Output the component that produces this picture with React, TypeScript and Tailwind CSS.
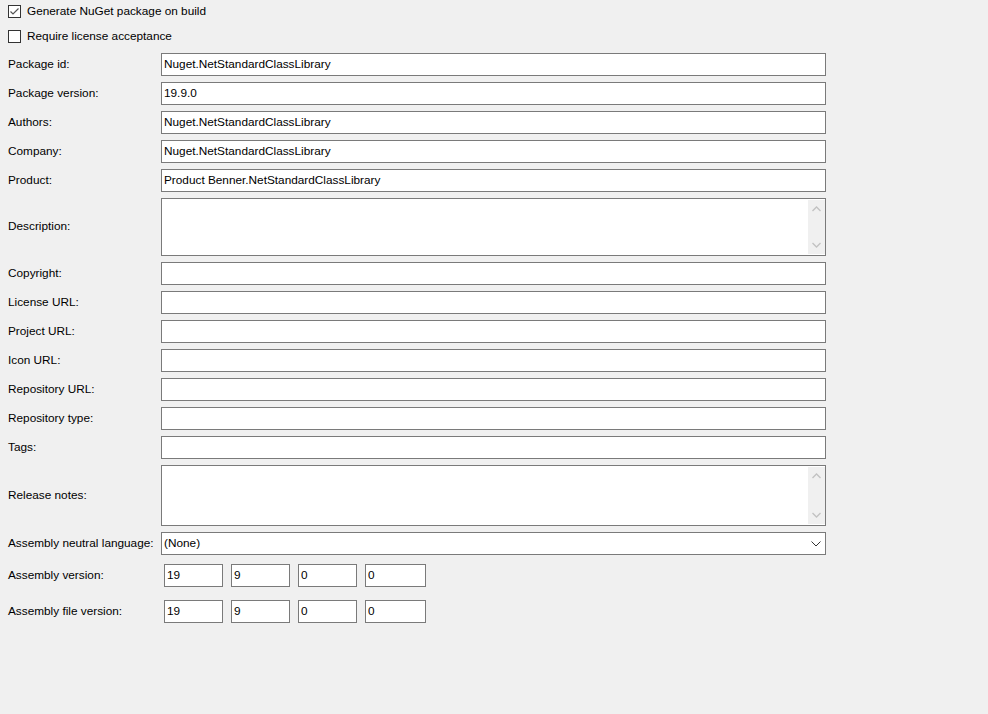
import React from "react"

const font = { fontFamily: '"Liberation Sans", Arial, sans-serif' }

function TextBox({ value = "" }: { value?: string }) {
  return (
    <div className="flex h-[23px] w-[665px] items-center whitespace-nowrap border border-[#7a7a7a] bg-white px-[2px] text-black">
      {value}
    </div>
  )
}

function ScrollArrows() {
  return (
    <div className="flex w-[17px] flex-col items-center justify-between bg-[#f0f0f0] py-[6px]">
      <svg width="9" height="6" viewBox="0 0 9 6">
        <polyline points="0.5,5 4.5,1 8.5,5" fill="none" stroke="#c2c2c2" strokeWidth="1.3" />
      </svg>
      <svg width="9" height="6" viewBox="0 0 9 6">
        <polyline points="0.5,1 4.5,5 8.5,1" fill="none" stroke="#c2c2c2" strokeWidth="1.3" />
      </svg>
    </div>
  )
}

function TextArea({ h }: { h: string }) {
  return (
    <div className={`flex w-[665px] justify-end border border-[#7a7a7a] bg-white py-[1px] ${h}`}>
      <ScrollArrows />
    </div>
  )
}

function Row({ label, children }: { label: string; children: React.ReactNode }) {
  return (
    <div className="flex items-center">
      <div className="w-[153px] shrink-0 whitespace-nowrap">{label}</div>
      {children}
    </div>
  )
}

function Check({ checked, label }: { checked?: boolean; label: string }) {
  return (
    <div className="flex h-[13px] items-center gap-[6px]">
      <div className="flex h-[13px] w-[13px] items-center justify-center border border-[#333333] bg-white">
        {checked && (
          <svg width="11" height="11" viewBox="0 0 11 11">
            <polyline points="1.5,5.5 4,8 9.5,2.5" fill="none" stroke="#555555" strokeWidth="1.2" />
          </svg>
        )}
      </div>
      <span className="whitespace-nowrap">{label}</span>
    </div>
  )
}

function VersionBoxes({ parts }: { parts: string[] }) {
  return (
    <div className="ml-[3px] flex gap-[8px]">
      {parts.map((p, i) => (
        <div
          key={i}
          className={`flex h-[23px] items-center border border-[#7a7a7a] bg-white px-[2px] text-black ${
            i === parts.length - 1 ? "w-[61px]" : "w-[59px]"
          }`}
        >
          {p}
        </div>
      ))}
    </div>
  )
}

export default function App() {
  const single = [
    ["Package id:", "Nuget.NetStandardClassLibrary"],
    ["Package version:", "19.9.0"],
    ["Authors:", "Nuget.NetStandardClassLibrary"],
    ["Company:", "Nuget.NetStandardClassLibrary"],
    ["Product:", "Product Benner.NetStandardClassLibrary"],
  ]
  const more = ["Copyright:", "License URL:", "Project URL:", "Icon URL:", "Repository URL:", "Repository type:", "Tags:"]

  return (
    <div className="h-[714px] w-[988px] overflow-hidden bg-[#f0f0f0] text-[11.8px] leading-none text-black" style={font}>
      <div className="flex flex-col px-[8px] pt-[5px]">
        <div className="flex flex-col gap-[12px]">
          <Check checked label="Generate NuGet package on build" />
          <Check label="Require license acceptance" />
        </div>

        <div className="mt-[10px] flex flex-col gap-[6px]">
          {single.map(([l, v]) => (
            <Row key={l} label={l}>
              <TextBox value={v} />
            </Row>
          ))}
          <Row label="Description:">
            <TextArea h="h-[58px]" />
          </Row>
          {more.map((l) => (
            <Row key={l} label={l}>
              <TextBox />
            </Row>
          ))}
          <Row label="Release notes:">
            <TextArea h="h-[61px]" />
          </Row>
          <Row label="Assembly neutral language:">
            <div className="flex h-[23px] w-[665px] items-center justify-between border border-[#7a7a7a] bg-white pl-[2px] pr-[4px]">
              <span>(None)</span>
              <svg width="10" height="6" viewBox="0 0 10 6">
                <polyline points="0.5,0.5 5,5 9.5,0.5" fill="none" stroke="#333333" strokeWidth="1" />
              </svg>
            </div>
          </Row>
        </div>

        <div className="mt-[9px] flex flex-col gap-[13px]">
          <Row label="Assembly version:">
            <VersionBoxes parts={["19", "9", "0", "0"]} />
          </Row>
          <Row label="Assembly file version:">
            <VersionBoxes parts={["19", "9", "0", "0"]} />
          </Row>
        </div>
      </div>
    </div>
  )
}
